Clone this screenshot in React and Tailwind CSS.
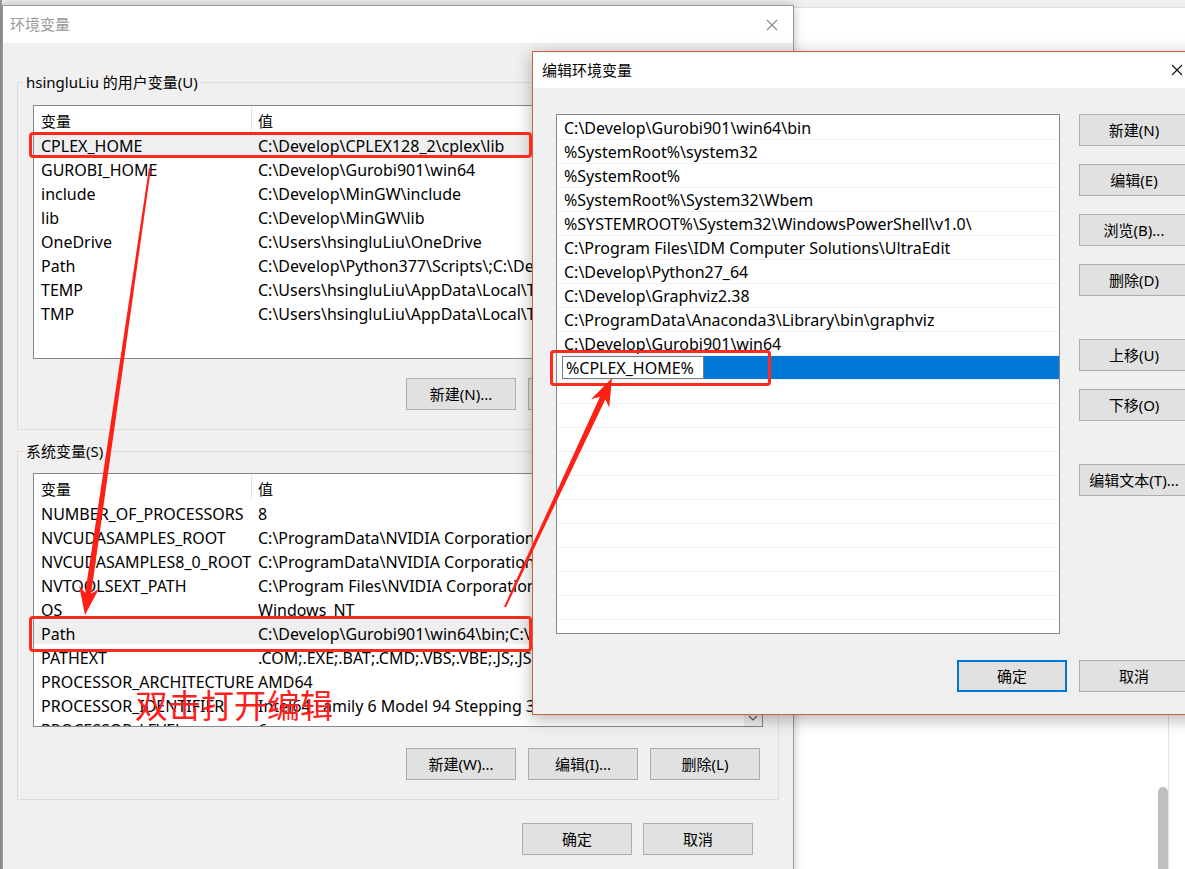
import React from "react";

const userVars = [
  ["CPLEX_HOME", "C:\\Develop\\CPLEX128_2\\cplex\\lib"],
  ["GUROBI_HOME", "C:\\Develop\\Gurobi901\\win64"],
  ["include", "C:\\Develop\\MinGW\\include"],
  ["lib", "C:\\Develop\\MinGW\\lib"],
  ["OneDrive", "C:\\Users\\hsingluLiu\\OneDrive"],
  ["Path", "C:\\Develop\\Python377\\Scripts\\;C:\\Develop\\Python377\\;"],
  ["TEMP", "C:\\Users\\hsingluLiu\\AppData\\Local\\Temp"],
  ["TMP", "C:\\Users\\hsingluLiu\\AppData\\Local\\Temp"],
];

const sysVars = [
  ["NUMBER_OF_PROCESSORS", "8"],
  ["NVCUDASAMPLES_ROOT", "C:\\ProgramData\\NVIDIA Corporation\\CUDA Samples\\v8.0"],
  ["NVCUDASAMPLES8_0_ROOT", "C:\\ProgramData\\NVIDIA Corporation\\CUDA Samples\\v8.0"],
  ["NVTOOLSEXT_PATH", "C:\\Program Files\\NVIDIA Corporation\\NvToolsExt\\"],
  ["OS", "Windows_NT"],
  ["Path", "C:\\Develop\\Gurobi901\\win64\\bin;C:\\WINDOWS\\system32;"],
  ["PATHEXT", ".COM;.EXE;.BAT;.CMD;.VBS;.VBE;.JS;.JSE;.WSF;.WSH;.MSC"],
  ["PROCESSOR_ARCHITECTURE", "AMD64"],
  ["PROCESSOR_IDENTIFIER", "Intel64 Family 6 Model 94 Stepping 3, GenuineIntel"],
  ["PROCESSOR_LEVEL", "6"],
];

const pathItems = [
  "C:\\Develop\\Gurobi901\\win64\\bin",
  "%SystemRoot%\\system32",
  "%SystemRoot%",
  "%SystemRoot%\\System32\\Wbem",
  "%SYSTEMROOT%\\System32\\WindowsPowerShell\\v1.0\\",
  "C:\\Program Files\\IDM Computer Solutions\\UltraEdit",
  "C:\\Develop\\Python27_64",
  "C:\\Develop\\Graphviz2.38",
  "C:\\ProgramData\\Anaconda3\\Library\\bin\\graphviz",
  "C:\\Develop\\Gurobi901\\win64",
];

function CloseX({ color }) {
  return (
    <svg width="12" height="12" viewBox="0 0 12 12">
      <path d="M1 1 L11 11 M11 1 L1 11" stroke={color} strokeWidth="1.1" fill="none" />
    </svg>
  );
}

function WinButton({ children, primary, className = "" }) {
  return (
    <div
      className={`h-[32px] w-[110px] flex items-center justify-center bg-[#e1e1e1] text-[15px] text-black ${
        primary ? "border-2 border-[#0078d7]" : "border border-[#adadad]"
      } ${className}`}
    >
      {children}
    </div>
  );
}

function VarList({ rows, selected, height, scroll }) {
  return (
    <div
      className="w-[730px] border border-[#828790] bg-white flex overflow-hidden"
      style={{ height }}
    >
      <div className="flex-1 min-w-0">
        <div className="flex h-[26px] pt-[4px] items-center text-[15px]">
          <div className="w-[217px] pl-[7px]">变量</div>
          <div className="w-px h-[26px] -mt-[4px] bg-[#e5e5e5]" />
          <div className="pl-[6px]">值</div>
        </div>
        {rows.map(([k, v]) => (
          <div
            key={k}
            className={`flex h-[24px] pt-[4px] items-center text-[16px] whitespace-nowrap ${
              k === selected ? "bg-[#efefef]" : ""
            }`}
          >
            <div className="w-[217px] pl-[7px] shrink-0">{k}</div>
            <div className="pl-[7px]">{v}</div>
          </div>
        ))}
      </div>
      {scroll && (
        <div className="w-[18px] bg-[#f0f0f0] flex flex-col justify-end items-center pb-[5px]">
          <svg width="10" height="6" viewBox="0 0 10 6">
            <path d="M1 1 L5 5 L9 1" stroke="#606060" strokeWidth="1.2" fill="none" />
          </svg>
        </div>
      )}
    </div>
  );
}

function EnvDialog() {
  return (
    <div className="absolute left-[2px] top-[5px] w-[792px] h-[870px] border border-[#9b9b9b] bg-[#f0f0f0] shadow-[0_0_10px_rgba(0,0,0,0.25)]">
      <div className="h-[37px] bg-white flex items-center justify-between pl-[7px] pr-[15px]">
        <span className="text-[15px] text-[#9a9a9a]">环境变量</span>
        <CloseX color="#8a8a8a" />
      </div>
      <div className="pl-[14px] pt-[29px]">
        <fieldset className="w-[762px] border border-[#dcdcdc] px-[15px] pb-[19px]">
          <legend className="-ml-[10px] px-[3px] h-[20px] leading-[20px] text-[15px]">
            hsingluLiu 的用户变量(U)
          </legend>
          <div className="mt-[13px]">
            <VarList rows={userVars} selected="CPLEX_HOME" height={254} />
          </div>
          <div className="flex justify-end gap-[12px] mt-[19px] pr-[3px]">
            <WinButton>新建(N)...</WinButton>
            <WinButton>编辑(E)...</WinButton>
            <WinButton>删除(D)</WinButton>
          </div>
        </fieldset>
        <fieldset className="w-[762px] mt-[11px] border border-[#dcdcdc] px-[15px] pb-[19px]">
          <legend className="-ml-[10px] px-[3px] h-[20px] leading-[20px] text-[15px]">
            系统变量(S)
          </legend>
          <div className="mt-[12px]">
            <VarList rows={sysVars} selected="Path" height={254} scroll />
          </div>
          <div className="flex justify-end gap-[12px] mt-[21px] pr-[3px]">
            <WinButton>新建(W)...</WinButton>
            <WinButton>编辑(I)...</WinButton>
            <WinButton>删除(L)</WinButton>
          </div>
        </fieldset>
        <div className="w-[762px] flex justify-end gap-[11px] mt-[23px] pr-[26px]">
          <WinButton>确定</WinButton>
          <WinButton>取消</WinButton>
        </div>
      </div>
    </div>
  );
}

function EditDialog() {
  const blanks = Array.from({ length: 12 });
  return (
    <div className="absolute left-[532px] top-[51px] w-[672px] h-[664px] border border-[#c4643e] bg-[#f0f0f0] shadow-[0_4px_16px_rgba(0,0,0,0.3)]">
      <div className="h-[36px] bg-white flex items-center justify-between pl-[9px] pr-[20px]">
        <span className="text-[15px] text-black">编辑环境变量</span>
        <CloseX color="#111" />
      </div>
      <div className="pl-[23px] pt-[26px]">
        <div className="flex gap-[19px]">
          <div className="w-[504px] h-[520px] border border-[#828790] bg-white overflow-hidden pt-px">
            {pathItems.map((p, i) => (
              <div
                key={i}
                className="h-[24px] border-b border-[#f0f0f0] pl-[7px] pt-[2px] leading-[21px] text-[16px] whitespace-nowrap"
              >
                {p}
              </div>
            ))}
            <div className="h-[24px] border-b border-[#f0f0f0] flex items-stretch">
              <div className="w-[5px]" />
              <div className="w-[142px] border border-[#7a7a7a] bg-white pl-[3px] pt-px leading-[20px] text-[16px]">
                %CPLEX_HOME%
              </div>
              <div className="flex-1 bg-[#0078d7]" />
            </div>
            {blanks.map((_, i) => (
              <div key={i} className="h-[24px] border-b border-[#f0f0f0]" />
            ))}
          </div>
          <div className="flex flex-col">
            <WinButton>新建(N)</WinButton>
            <WinButton className="mt-[18px]">编辑(E)</WinButton>
            <WinButton className="mt-[18px]">浏览(B)...</WinButton>
            <WinButton className="mt-[18px]">删除(D)</WinButton>
            <WinButton className="mt-[43px]">上移(U)</WinButton>
            <WinButton className="mt-[18px]">下移(O)</WinButton>
            <WinButton className="mt-[43px]">编辑文本(T)...</WinButton>
          </div>
        </div>
        <div className="w-[633px] flex justify-end gap-[12px] mt-[26px]">
          <WinButton primary>确定</WinButton>
          <WinButton>取消</WinButton>
        </div>
      </div>
    </div>
  );
}

function Annotations() {
  return (
    <>
      <div className="absolute left-[29px] top-[132px] w-[503px] h-[26px] border-[3px] border-[#ff2a1c] rounded-[4px]" />
      <div className="absolute left-[29px] top-[616px] w-[503px] h-[36px] border-[3px] border-[#ff2a1c] rounded-[4px]" />
      <div className="absolute left-[550px] top-[350px] w-[221px] h-[36px] border-[3px] border-[#ff2a1c] rounded-[4px]" />
      <svg className="absolute left-0 top-0" width="1185" height="869" viewBox="0 0 1185 869">
        <polygon
          fill="#ff2015"
          points="150.99,168.14 91.14,593.66 98.93,588.73 85,615 79.13,585.85 85.2,592.8 149.01,167.86"
        />
        <polygon
          fill="#ff2015"
          points="505.91,607.42 605.41,399.2 609.21,407.6 612,378 591.09,399.14 599.97,396.66 504.09,606.58"
        />
      </svg>
      <div className="absolute left-[135px] top-[684px] text-[33px] leading-[40px] text-[#ff1f1f] font-['Noto_Sans_CJK_SC',sans-serif]">
        双击打开编辑
      </div>
    </>
  );
}

export default function App() {
  return (
    <div className="relative w-[1185px] h-[869px] overflow-hidden bg-white font-['Noto_Sans','Noto_Sans_CJK_SC',sans-serif] text-black">
      <div className="h-[8px] bg-[#efeff0] border-b border-[#dedede]" />
      <div className="absolute left-0 top-0 w-[2px] h-full bg-[#9a9a9a]" />
      <div className="absolute left-[1168px] top-[700px] w-px h-[169px] bg-[#e3e3e3]" />
      <div className="absolute left-[1158px] top-[787px] w-[10px] h-[90px] rounded-t-[5px] bg-[#bfbfbf]" />
      <EnvDialog />
      <EditDialog />
      <Annotations />
    </div>
  );
}
